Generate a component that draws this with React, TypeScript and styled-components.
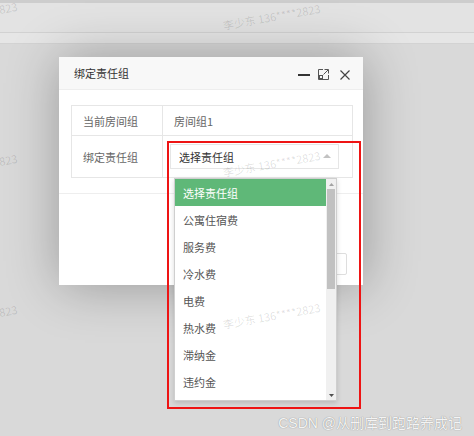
import React from "react";
import styled, { createGlobalStyle } from "styled-components";

const GlobalStyle = createGlobalStyle`
  html, body { margin: 0; padding: 0; }
  body { font-family: "Noto Sans CJK SC", "Noto Sans", sans-serif; }
  #root { width: 474px; height: 436px; overflow: hidden; }
`;

const Page = styled.div`
  position: relative;
  width: 474px;
  height: 436px;
  display: flex;
  flex-direction: column;
  background: #d9d9d9;
  overflow: hidden;
`;
const TopStrip = styled.div`
  height: 3px;
  background: #cdcdcd;
`;
const HeaderBar = styled.div`
  height: 29px;
  background: #e3e3e3;
  border-bottom: 1px solid #d2d2d2;
`;
const SubBar = styled.div`
  height: 10px;
  background: #e6e6e6;
  border-bottom: 1px solid #d3d3d3;
`;
const Main = styled.div`
  flex: 1;
  background: #d9d9d9;
`;

const Dialog = styled.div`
  position: absolute;
  left: 59px;
  top: 57px;
  width: 304px;
  background: #fff;
  box-shadow: 1px 1px 50px rgba(0, 0, 0, 0.3);
  z-index: 2;
  display: flex;
  flex-direction: column;
`;
const TitleBar = styled.div`
  height: 32px;
  background: #f8f8f8;
  border-bottom: 1px solid #eee;
  display: flex;
  align-items: center;
  justify-content: space-between;
  padding: 0 13px 0 15px;
`;
const Title = styled.span`
  font-size: 11px;
  color: #333;
`;
const Controls = styled.div`
  display: flex;
  align-items: center;
  padding-top: 3px;
`;
const CtrlIcon = styled.span<{ $gap?: number }>`
  display: flex;
  margin-left: ${(p) => p.$gap ?? 0}px;
`;

const Body = styled.div`
  padding: 15px 10px 15px 12px;
`;
const InfoTable = styled.div`
  display: grid;
  grid-template-columns: 91px 190px;
  grid-template-rows: 30px 42px;
  width: 282px;
  border-top: 1px solid #e6e6e6;
  border-left: 1px solid #e6e6e6;
  box-sizing: border-box;
`;
const Cell = styled.div<{ $pad?: number }>`
  box-sizing: border-box;
  border-right: 1px solid #e6e6e6;
  border-bottom: 1px solid #e6e6e6;
  display: flex;
  align-items: center;
  padding-left: ${(p) => p.$pad ?? 11}px;
  font-size: 11px;
  color: #666;
  position: relative;
`;
const SelectBox = styled.div`
  position: relative;
  box-sizing: border-box;
  width: 169px;
  height: 25px;
  border: 1px solid #e6e6e6;
  display: flex;
  align-items: center;
  padding-left: 8px;
  font-size: 11px;
  color: #333;
`;
const Caret = styled.svg`
  position: absolute;
  right: 7px;
  top: 9px;
`;
const Dropdown = styled.div`
  position: absolute;
  left: 3px;
  top: 33px;
  width: 163px;
  height: 223px;
  box-sizing: border-box;
  background: #fff;
  border: 1px solid #cfcfcf;
  box-shadow: 0 2px 5px rgba(0, 0, 0, 0.15);
  display: flex;
  z-index: 5;
`;
const Options = styled.ul`
  flex: 1;
  margin: 0;
  padding: 0;
  list-style: none;
  overflow: hidden;
`;
const Option = styled.li<{ $selected?: boolean }>`
  box-sizing: border-box;
  height: 27px;
  padding: 2px 0 0 8px;
  line-height: 25px;
  font-size: 11px;
  white-space: nowrap;
  color: ${(p) => (p.$selected ? "#fff" : "#555")};
  background: ${(p) => (p.$selected ? "#5FB878" : "transparent")};
`;
const ScrollBar = styled.div`
  width: 10px;
  background: #f0f0f0;
  display: flex;
  flex-direction: column;
`;
const ScrollBtn = styled.div`
  height: 10px;
  display: flex;
  align-items: center;
  justify-content: center;
`;
const Track = styled.div`
  flex: 1;
  padding: 0 1px;
`;
const Thumb = styled.div`
  height: 100px;
  background: #c1c1c1;
`;

const Footer = styled.div`
  box-sizing: border-box;
  height: 92px;
  border-top: 1px solid #eee;
  display: flex;
  justify-content: flex-end;
  align-items: flex-end;
  gap: 6px;
  padding: 0 16px 10px;
`;
const Button = styled.button<{ $primary?: boolean }>`
  height: 22px;
  padding: 0 13px;
  font-family: inherit;
  font-size: 11px;
  border: 1px solid ${(p) => (p.$primary ? "#1E9FFF" : "#dedede")};
  background: ${(p) => (p.$primary ? "#1E9FFF" : "#fff")};
  color: ${(p) => (p.$primary ? "#fff" : "#333")};
  border-radius: 2px;
`;

const Highlight = styled.div`
  position: absolute;
  left: 167px;
  top: 141px;
  width: 194px;
  height: 268px;
  box-sizing: border-box;
  border: 2px solid #ee1414;
  z-index: 8;
  pointer-events: none;
`;

const WatermarkLayer = styled.div`
  position: absolute;
  inset: 0;
  pointer-events: none;
  z-index: 10;
`;
const Mark = styled.span`
  position: absolute;
  font-size: 11px;
  line-height: 14px;
  white-space: nowrap;
  color: rgba(0, 0, 0, 0.13);
  transform: rotate(-10deg);
  transform-origin: 0 50%;
`;
const Credit = styled.span`
  position: absolute;
  right: 12px;
  top: 414px;
  font-family: "Liberation Sans", "Noto Sans CJK SC", sans-serif;
  font-size: 14px;
  line-height: 18px;
  color: rgba(255, 255, 255, 0.92);
  text-shadow: 0 0 1px rgba(0, 0, 0, 0.45);
  white-space: nowrap;
  z-index: 11;
`;

const options = [
  "选择责任组",
  "公寓住宿费",
  "服务费",
  "冷水费",
  "电费",
  "热水费",
  "滞纳金",
  "违约金",
];

const marks = [
  { x: 223, y: 25 },
  { x: -80, y: 23 },
  { x: 223, y: 172 },
  { x: -80, y: 175 },
  { x: 223, y: 324 },
  { x: -80, y: 326 },
];

export default function App() {
  return (
    <>
      <GlobalStyle />
      <Page>
        <TopStrip />
        <HeaderBar />
        <SubBar />
        <Main />

        <Dialog>
          <TitleBar>
            <Title>绑定责任组</Title>
            <Controls>
              <CtrlIcon>
                <svg width="12" height="12" viewBox="0 0 12 12">
                  <rect x="0" y="5" width="12" height="2" fill="#333" />
                </svg>
              </CtrlIcon>
              <CtrlIcon $gap={8}>
                <svg width="11" height="11" viewBox="0 0 11 11" fill="none" stroke="#555" strokeWidth="1">
                  <path d="M5 0.5H0.5V10.5H10.5V6" />
                  <rect x="1.5" y="6.5" width="3" height="3" />
                  <path d="M5.5 5.5L10 1" />
                  <path d="M6.5 0.5H10.5V4.5" />
                </svg>
              </CtrlIcon>
              <CtrlIcon $gap={11}>
                <svg width="10" height="10" viewBox="0 0 10 10">
                  <path d="M0.5 0.5L9.5 9.5M9.5 0.5L0.5 9.5" stroke="#444" strokeWidth="1.2" />
                </svg>
              </CtrlIcon>
            </Controls>
          </TitleBar>

          <Body>
            <InfoTable>
              <Cell>当前房间组</Cell>
              <Cell>房间组1</Cell>
              <Cell>绑定责任组</Cell>
              <Cell $pad={7}>
                <SelectBox>
                  选择责任组
                  <Caret width="8" height="4" viewBox="0 0 8 4">
                    <polygon points="0,4 4,0 8,4" fill="#c2c2c2" />
                  </Caret>
                  <Dropdown>
                    <Options>
                      {options.map((o, i) => (
                        <Option key={o} $selected={i === 0}>
                          {o}
                        </Option>
                      ))}
                    </Options>
                    <ScrollBar>
                      <ScrollBtn>
                        <svg width="5" height="3" viewBox="0 0 5 3">
                          <polygon points="0,3 2.5,0 5,3" fill="#a3a3a3" />
                        </svg>
                      </ScrollBtn>
                      <Track>
                        <Thumb />
                      </Track>
                      <ScrollBtn>
                        <svg width="5" height="3" viewBox="0 0 5 3">
                          <polygon points="0,0 5,0 2.5,3" fill="#505050" />
                        </svg>
                      </ScrollBtn>
                    </ScrollBar>
                  </Dropdown>
                </SelectBox>
              </Cell>
            </InfoTable>
          </Body>

          <Footer>
            <Button $primary>确定</Button>
            <Button>取消</Button>
          </Footer>
        </Dialog>

        <Highlight />

        <WatermarkLayer>
          {marks.map((m, i) => (
            <Mark key={i} style={{ left: m.x, top: m.y - 7 }}>
              李少东 136****2823
            </Mark>
          ))}
        </WatermarkLayer>
        <Credit>CSDN @从删库到跑路养成记</Credit>
      </Page>
    </>
  );
}
